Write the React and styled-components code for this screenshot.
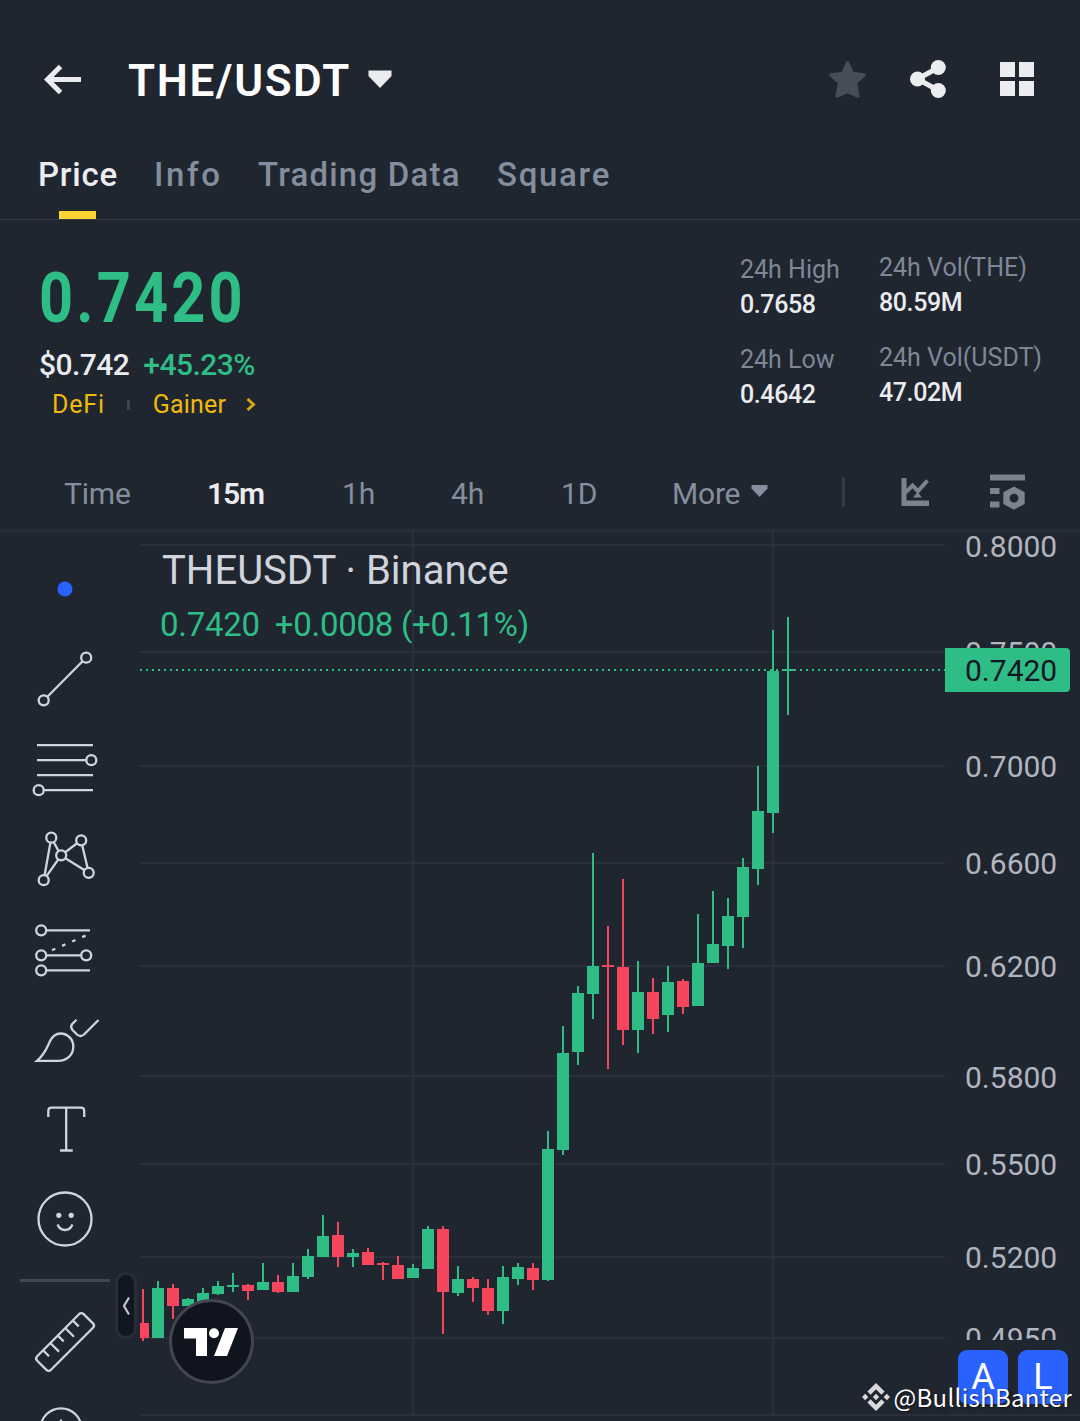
import styled, { createGlobalStyle } from "styled-components";
import { SiBinance } from "react-icons/si";

const GlobalStyle = createGlobalStyle`
  *, *::before, *::after {
    box-sizing: border-box;
  }

  body {
    margin: 0;
    background: #202630;
  }
`;

const Screen = styled.div`
  position: relative;
  display: flex;
  flex-direction: column;
  width: 1080px;
  height: 1421px;
  overflow: hidden;
  background: #202630;
  color: #eaecef;
  font-family: "Roboto", "Liberation Sans", sans-serif;
  white-space: nowrap;

  > * {
    flex-shrink: 0;
  }

  svg {
    display: block;
    flex-shrink: 0;
  }
`;

/* ---------- header ---------- */

const Header = styled.header`
  display: flex;
  align-items: center;
  height: 158px;
  padding: 0 46px 0 44px;
`;

const Pair = styled.h1`
  margin: 4px 18px 0 46px;
  width: 222px;
  font-size: 44px;
  font-weight: 600;
  line-height: 50px;
  letter-spacing: 1.6px;
  color: #fff;
`;

const Actions = styled.div`
  display: flex;
  align-items: center;
  margin-left: auto;

  svg:nth-child(2) {
    margin: 0 54px 0 43px;
  }
`;

const Tabs = styled.nav`
  display: grid;
  grid-template-columns: 116px 104px 239px auto;
  height: 62px;
  padding-left: 38px;
  border-bottom: 1px solid #333b47;
`;

const Tab = styled.div`
  display: flex;
  flex-direction: column;
  justify-content: space-between;
  font-size: 33px;
  font-weight: 500;
  line-height: 34px;
  letter-spacing: ${(props) => props.$spacing}px;
  color: ${(props) => (props.$active ? "#eaecef" : "#848e9c")};

  &::after {
    content: "";
    width: 37px;
    height: 8px;
    margin-left: 21px;
    background: ${(props) => (props.$active ? "#fcd535" : "transparent")};
  }
`;

/* ---------- price summary ---------- */

const Summary = styled.section`
  display: flex;
  justify-content: space-between;
  height: 234px;
  padding: 32px 37px 0 39px;
`;

const LastPrice = styled.div`
  height: 93px;
  font-size: 70px;
  font-weight: 700;
  line-height: 92px;
  letter-spacing: 3.7px;
  color: #2ebd85;
  transform: scaleX(0.85);
  transform-origin: left;
`;

const Change = styled.div`
  display: flex;
  gap: 14px;
  font-size: 30px;
  font-weight: 500;
  line-height: 40px;
  letter-spacing: -0.55px;
  color: #eaecef;

  span {
    color: #2ebd85;
  }
`;

const Tags = styled.div`
  display: flex;
  align-items: center;
  padding-left: 13px;
  font-size: 25px;
  line-height: 40px;
  color: #f0b90b;

  svg {
    margin-left: 20px;
  }
`;

const Tag = styled.span`
  letter-spacing: ${(props) => props.$spacing}px;
`;

const TagDivider = styled.i`
  width: 3px;
  height: 10px;
  margin: 0 23px 0 22px;
  background: #3b4452;
`;

const Stats = styled.div`
  display: flex;
`;

const StatColumn = styled.div`
  display: flex;
  flex-direction: column;
  gap: 20px;
  width: ${(props) => props.$width}px;
  margin-top: ${(props) => (props.$raised ? -2 : 0)}px;
`;

const Stat = styled.div`
  font-size: 25px;
  line-height: 35px;
  color: #7e8796;

  strong {
    display: block;
    font-weight: 500;
    letter-spacing: -0.4px;
    color: #eaecef;
  }
`;

/* ---------- interval bar ---------- */

const Intervals = styled.div`
  display: flex;
  align-items: center;
  height: 79px;
  padding: 0 55px 0 64px;
  border-bottom: 4px solid #272d37;
`;

const Interval = styled.div`
  width: ${(props) => props.$width}px;
  padding-top: 4px;
  font-size: 30px;
  line-height: 40px;
  font-weight: ${(props) => (props.$active ? 600 : 400)};
  letter-spacing: ${(props) => (props.$active ? -1.2 : -0.2)}px;
  color: ${(props) => (props.$active ? "#eaecef" : "#848e9c")};
`;

const More = styled(Interval)`
  display: flex;
  align-items: center;
  gap: 11px;

  svg {
    margin-top: -5px;
  }
`;

const Separator = styled.i`
  width: 3px;
  height: 30px;
  background: #333b47;
`;

const ChartTools = styled.div`
  display: flex;
  align-items: center;
  margin-left: auto;
  gap: 61px;
`;

/* ---------- chart ---------- */

const Main = styled.main`
  display: flex;
  height: 888px;
`;

const Toolbar = styled.aside`
  position: relative;
  display: flex;
  flex-direction: column;
  width: 140px;
  padding-top: 11px;
`;

const ToolIcon = styled.svg.attrs({ width: 130, height: 90, viewBox: "0 0 130 90" })`
  fill: none;
  stroke: #d1d4dc;
  stroke-width: 2.3;
`;

const ToolDivider = styled.hr`
  flex-shrink: 0;
  width: 90px;
  height: 3px;
  margin: 15px 0 15px 20px;
  border: 0;
  background: #434651;
`;

const Collapse = styled.button`
  position: absolute;
  top: 739px;
  left: 115px;
  display: grid;
  place-items: center;
  width: 22px;
  height: 67px;
  padding: 0;
  border: 3px solid #272e38;
  border-radius: 11px;
  background: #121620;
`;

const Plot = styled.div`
  position: relative;
  width: 805px;

  > svg {
    margin-top: -3px;
  }
`;

const Legend = styled.div`
  position: absolute;
  top: 13px;
  left: 20px;
  color: #d1d4dc;
`;

const LegendTitle = styled.div`
  padding-left: 2px;
  font-size: 40px;
  line-height: 50px;
`;

const LegendValues = styled.div`
  display: flex;
  gap: 15px;
  padding-top: 4px;
  font-size: 33px;
  line-height: 50px;
  letter-spacing: -0.27px;
  color: #2ebd85;
`;

const LogoBadge = styled.div`
  position: absolute;
  top: 766px;
  left: 28.5px;
  display: grid;
  place-items: center;
  width: 85px;
  height: 85px;
  border: 3px solid #434651;
  border-radius: 50%;
  background: #10141e;
`;

const Axis = styled.div`
  position: relative;
  display: flex;
  flex-direction: column;
  width: 135px;

  > svg text {
    font-size: 30px;
    fill: #b2b5be;
  }
`;

const PriceTag = styled.div`
  position: absolute;
  top: 115px;
  left: 0;
  width: 125px;
  height: 44px;
  padding-left: 20px;
  border-radius: 0 4px 4px 0;
  background: #2ebd85;
  color: #131722;
  font-size: 30px;
  line-height: 46px;
`;

const ScaleButtons = styled.div`
  display: flex;
  gap: 10px;
  height: 74px;
  padding: 10px 0 0 13px;
`;

const ScaleButton = styled.button`
  width: 50px;
  height: 54px;
  padding: 0;
  border: 0;
  border-radius: 9px;
  background: #2962ff;
  color: #fff;
  font-family: inherit;
  font-size: 36px;
  line-height: 54px;
`;

const AxisFoot = styled.div`
  height: 2px;
  margin-left: 2px;
  background: #2a303b;
`;

const Watermark = styled.div`
  position: absolute;
  right: 8px;
  bottom: 6px;
  display: flex;
  align-items: center;
  gap: 4px;
  font-family: "Noto Sans CJK SC", "Noto Sans", sans-serif;
  font-size: 24px;
  line-height: 36px;
  letter-spacing: 0.3px;
  color: #fff;
  text-shadow: 1px 1px 2px rgba(0, 0, 0, 0.6);

  svg {
    color: #d9d9d9;
  }
`;

const UP = "#2ebd85";
const DOWN = "#f6465d";
const GRID = "#2a303b";

// [up, high, bodyTop, bodyBottom, low], one candle every 15px
const candles = [
  [0, 1289, 1323, 1338, 1341],
  [1, 1281, 1288, 1338, 1338],
  [0, 1284, 1288, 1306, 1319],
  [1, 1298, 1299, 1306, 1306],
  [1, 1288, 1293, 1302, 1302],
  [1, 1281, 1286, 1294, 1295],
  [1, 1273, 1285, 1287, 1292],
  [0, 1284, 1285, 1291, 1300],
  [1, 1263, 1282, 1290, 1290],
  [0, 1275, 1282, 1292, 1293],
  [1, 1263, 1276, 1292, 1292],
  [1, 1249, 1256, 1277, 1279],
  [1, 1215, 1236, 1257, 1257],
  [0, 1222, 1235, 1257, 1267],
  [1, 1249, 1253, 1257, 1267],
  [0, 1248, 1252, 1265, 1265],
  [0, 1262, 1263, 1265, 1280],
  [0, 1256, 1265, 1279, 1279],
  [1, 1264, 1268, 1278, 1278],
  [1, 1226, 1229, 1269, 1269],
  [0, 1226, 1229, 1292, 1334],
  [1, 1266, 1279, 1293, 1296],
  [0, 1277, 1279, 1288, 1302],
  [0, 1279, 1288, 1311, 1315],
  [1, 1266, 1277, 1311, 1324],
  [1, 1263, 1267, 1279, 1285],
  [0, 1263, 1268, 1280, 1290],
  [1, 1131, 1149, 1280, 1281],
  [1, 1026, 1053, 1150, 1155],
  [1, 986, 993, 1052, 1065],
  [1, 853, 966, 994, 1019],
  [0, 926, 965, 967, 1069],
  [0, 879, 967, 1030, 1045],
  [1, 961, 992, 1030, 1053],
  [0, 978, 992, 1019, 1034],
  [1, 966, 982, 1015, 1032],
  [0, 979, 981, 1007, 1014],
  [1, 914, 963, 1006, 1006],
  [1, 891, 944, 963, 963],
  [1, 898, 916, 946, 969],
  [1, 858, 867, 917, 948],
  [1, 766, 811, 869, 885],
  [1, 630, 671, 813, 833],
  [1, 617, 669, 671, 715],
];

// [label, grid line, label baseline]
const levels = [
  ["0.8000", 545, 557],
  ["0.7500", 652, 663],
  ["0.7000", 766, 777],
  ["0.6600", 863, 874],
  ["0.6200", 966, 977],
  ["0.5800", 1076, 1088],
  ["0.5500", 1164, 1175],
  ["0.5200", 1257, 1268],
  ["0.4950", 1338, 1349],
];

const tabs = [
  ["Price", 0.8],
  ["Info", 2.6],
  ["Trading Data", 1.2],
  ["Square", 1.7],
];

function Dots({ points }) {
  return points.map(([x, y]) => <circle key={`${x}-${y}`} cx={x} cy={y} r="5" fill="#202630" />);
}

function DrawingTools() {
  return (
    <Toolbar>
      <ToolIcon>
        <circle cx="65" cy="45" r="7.5" fill="#2962ff" stroke="none" />
      </ToolIcon>
      <ToolIcon>
        <path d="M43.7 66.5 86 23.7" />
        <Dots points={[[43.7, 66.3], [86.2, 23.7]]} />
      </ToolIcon>
      <ToolIcon>
        <path d="M37 21.2h56M37 36.2h54M37 51.2h56M39 66.2h54" />
        <Dots points={[[91.3, 36.2], [38.7, 66.2]]} />
      </ToolIcon>
      <ToolIcon>
        <path d="M43.7 66.2 51.3 23.7 61 41.5 81 26.3 88.7 58.7 61 41.5z" />
        <Dots points={[[51.3, 23.7], [81.2, 26.3], [61.2, 41.3], [43.7, 66.2], [88.7, 58.8]]} />
      </ToolIcon>
      <ToolIcon>
        <path d="M41 26.4h49M41 51.3h45M41 66.4h49" />
        <path d="M52 46.2 88 30.6" strokeDasharray="3.6 7.4" />
        <Dots points={[[41.2, 26.3], [41.2, 51.3], [41.2, 66.3], [86.2, 51.3]]} />
      </ToolIcon>
      <ToolIcon>
        <path d="M37 66.8C45 60 47 53.5 49.8 47.5 52.5 42 56 39.5 60.5 39.5 68 39.5 73.3 45.5 73.3 52.5 73.3 61 67 66.8 58 66.8z" />
        <path d="M76.5 25.8 72 30.3Q70 33 72.5 36L77 40.5Q80.5 43.5 84 40.5L98.5 26" />
      </ToolIcon>
      <ToolIcon>
        <path d="M48.3 33V27Q48.3 23.7 51.6 23.7H81Q84.2 23.7 84.2 27V33M66.2 23.7V66.5M60 66.5H72.7" />
      </ToolIcon>
      <ToolIcon>
        <circle cx="65" cy="45" r="26.5" />
        <path d="M57.5 50.5C59 54 61.5 56 65 56S71 54 72.5 50.5" />
        <g fill="#d1d4dc" stroke="none">
          <circle cx="58.8" cy="41.3" r="2.6" />
          <circle cx="71.2" cy="41.3" r="2.6" />
        </g>
      </ToolIcon>
      <ToolDivider />
      <ToolIcon>
        <path d="M79 17.2Q81.3 15 83.6 17.2L93 26.4Q95.2 28.6 93 30.8L51 72.8Q48.7 75 46.4 72.8L37.2 63.7Q35 61.4 37.2 59.2z" />
        <path d="M43.3 53.5 49 59.2M50.5 46.2 59 54.6M58 38.7 63.7 44.4M65.5 31.2 74 39.7M73 23.7 78.7 29.4" />
      </ToolIcon>
      <ToolIcon>
        <circle cx="61" cy="41.8" r="20.5" />
        <path d="M61 32.500v20M51 42.300h20M76 57 90 71" />
      </ToolIcon>
      <Collapse aria-label="Collapse">
        <svg width="10" height="20" viewBox="0 0 10 20" fill="none" stroke="#c3c6ce" strokeWidth="2.2">
          <path d="M8 1.5 3 10l5 8.5" />
        </svg>
      </Collapse>
    </Toolbar>
  );
}

function CandleChart() {
  return (
    <svg width="805" height="891" viewBox="140 530 805 891" shapeRendering="crispEdges">
      {levels.map(([label, y]) => (
        <rect key={label} x="140" y={y - 1} width="805" height="2" fill={GRID} />
      ))}
      <rect x="140" y="1414" width="805" height="2" fill={GRID} />
      <rect x="412" y="530" width="2" height="884" fill={GRID} />
      <rect x="772" y="530" width="2" height="884" fill={GRID} />
      <path d="M140 670H945" stroke={UP} strokeWidth="2" strokeDasharray="2 4" />
      {candles.map(([up, high, top, bottom, low], i) => {
        // the first candle sits half a bar further right, cut by the plot edge
        const x = 143 + i * 15;
        return (
          <g key={x} fill={up ? UP : DOWN}>
            <rect x={x - 1} y={high} width="2" height={low - high} />
            <rect x={x - 6} y={top} width="12" height={bottom - top} />
          </g>
        );
      })}
    </svg>
  );
}

export default function App() {
  return (
    <>
      <GlobalStyle />
      <Screen>
        <Header>
          <svg width="38" height="30" viewBox="0 0 38 30" fill="none" stroke="#eaecef" strokeWidth="5">
            <path d="M37 15.5H4M16.5 2.5 3.5 15.5l13 13" />
          </svg>
          <Pair>THE/USDT</Pair>
          <svg width="24" height="19" viewBox="0 0 24 19" fill="#eaecef">
            <path d="M.5.5h23V6L12 18 .5 6z" />
          </svg>
          <Actions>
            <svg width="38" height="40" viewBox="0 0 38 40">
              <path
                d="M18.500 4l4.800 10.600 11.700 1.300-8.700 7.900 2.500 13.200L18.500 32.400 8.200 37l2.500-13.200-8.700-7.900 11.700-1.300z"
                fill="#474d59"
                stroke="#474d59"
                strokeWidth="3.5"
                strokeLinejoin="round"
              />
            </svg>
            <svg width="36" height="38" viewBox="0 0 36 38" fill="#eaecef">
              <path d="M28.5 7.5 7.5 19l21 11.5" fill="none" stroke="#eaecef" strokeWidth="5" />
              <circle cx="28.3" cy="7.5" r="7.5" />
              <circle cx="7.5" cy="19" r="7.5" />
              <circle cx="28.3" cy="30.5" r="7.5" />
            </svg>
            <svg width="34" height="34" viewBox="0 0 34 34" fill="#eaecef">
              <path d="M0 0h15v15H0zM19 0h15v15H19zM0 19h15v15H0zM19 19h15v15H19z" />
            </svg>
          </Actions>
        </Header>

        <Tabs>
          {tabs.map(([label, spacing]) => (
            <Tab key={label} $spacing={spacing} $active={label === "Price"}>
              {label}
            </Tab>
          ))}
        </Tabs>

        <Summary>
          <div>
            <LastPrice>0.7420</LastPrice>
            <Change>
              $0.742 <span>+45.23%</span>
            </Change>
            <Tags>
              <Tag $spacing={0.8}>DeFi</Tag>
              <TagDivider />
              <Tag $spacing={0.2}>Gainer</Tag>
              <svg width="10" height="14" viewBox="0 0 10 14" fill="none" stroke="#d9a514" strokeWidth="3">
                <path d="M1.5 1 7.500 6.500l-6 5.500" />
              </svg>
            </Tags>
          </div>
          <Stats>
            <StatColumn $width={139}>
              <Stat>
                24h High<strong>0.7658</strong>
              </Stat>
              <Stat>
                24h Low<strong>0.4642</strong>
              </Stat>
            </StatColumn>
            <StatColumn $width={164} $raised>
              <Stat>
                24h Vol(THE)<strong>80.59M</strong>
              </Stat>
              <Stat>
                24h Vol(USDT)<strong>47.02M</strong>
              </Stat>
            </StatColumn>
          </Stats>
        </Summary>

        <Intervals>
          <Interval $width={143}>Time</Interval>
          <Interval $width={135} $active>
            15m
          </Interval>
          <Interval $width={109}>1h</Interval>
          <Interval $width={110}>4h</Interval>
          <Interval $width={111}>1D</Interval>
          <More $width={170}>
            More
            <svg width="17" height="13" viewBox="0 0 17 13" fill="#848e9c">
              <path d="M.5 0h16v3.5l-8 8.5-8-8.500z" />
            </svg>
          </More>
          <Separator />
          <ChartTools>
            <svg width="28" height="28" viewBox="0 0 28 28" fill="#7d828e">
              <path d="M.5 0h5v22.5H28V28H.5z" />
              <path d="M4.5 14.5 11.5 7.5 17 13 26.500 2.500" fill="none" stroke="#7d828e" strokeWidth="4" />
              <path d="M16.5 14 21 19.5h-9z" />
            </svg>
            <svg width="35" height="36" viewBox="0 0 35 36" fill="#7d828e">
              <path d="M0 .5h35v6H0zM0 14h9.500v6H0zM0 27.500h9.500v6H0z" />
              <path
                fillRule="evenodd"
                d="M24 12.500 34.700 18.300v11.600L24 35.700 13.300 29.900V18.300zM24 19.700a4.400 4.400 0 1 0 0 8.800 4.400 4.400 0 0 0 0-8.800z"
              />
            </svg>
          </ChartTools>
        </Intervals>

        <Main>
          <DrawingTools />
          <Plot>
            <CandleChart />
            <Legend>
              <LegendTitle>THEUSDT · Binance</LegendTitle>
              <LegendValues>
                <span>0.7420</span>
                <span>+0.0008 (+0.11%)</span>
              </LegendValues>
            </Legend>
            <LogoBadge>
              <svg width="54" height="28" viewBox="0 0 54 28" fill="#fff">
                <path d="M0 0h23v28H12V10.500H0zM41 0h13L43 28H30z" />
                <circle cx="30" cy="5.200" r="5" />
              </svg>
            </LogoBadge>
          </Plot>
          <Axis>
            <svg width="135" height="807" viewBox="945 533 135 807">
              {levels.map(([label, , baseline]) => (
                <text key={label} x="965" y={baseline}>
                  {label}
                </text>
              ))}
            </svg>
            <PriceTag>0.7420</PriceTag>
            <ScaleButtons>
              <ScaleButton>A</ScaleButton>
              <ScaleButton>L</ScaleButton>
            </ScaleButtons>
            <AxisFoot />
          </Axis>
        </Main>

        <Watermark>
          <SiBinance size={28} />
          @BullishBanter
        </Watermark>
      </Screen>
    </>
  );
}
